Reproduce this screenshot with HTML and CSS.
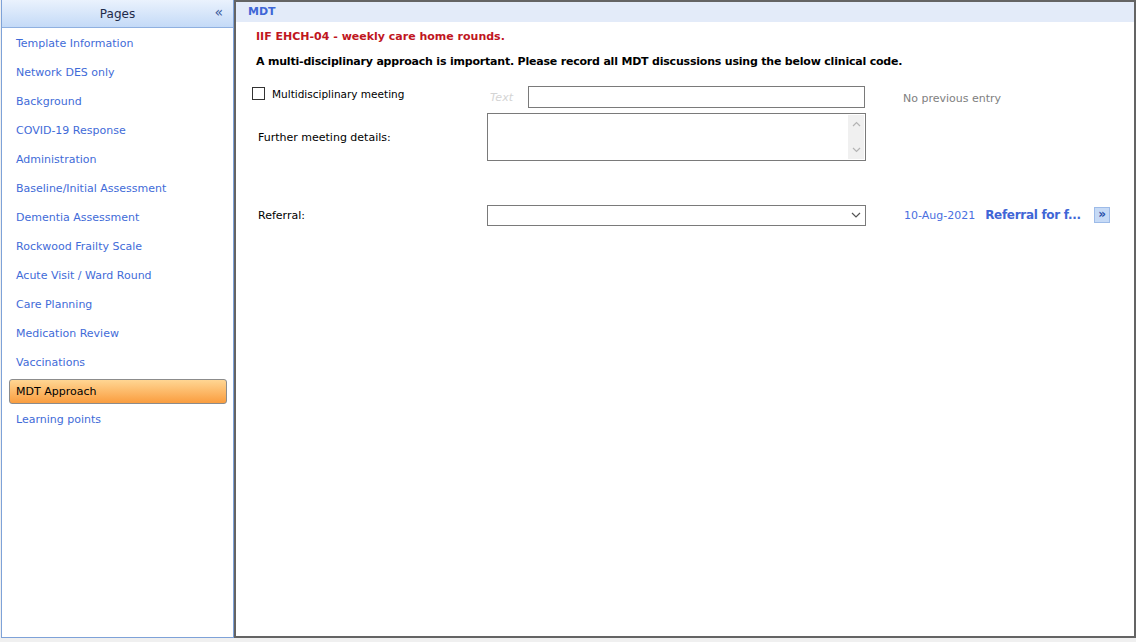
FILE: index.html
```html
<!DOCTYPE html>
<html lang="en">
<head>
    <meta charset="UTF-8">
    <title>MDT Approach</title>
    <link rel="stylesheet" href="styles.css">
</head>
<body>
    <div class="window">
        <div class="sidebar">
            <div class="sidebar-head">
                <span>Pages</span>
                <span class="collapse">&laquo;</span>
            </div>
            <ul class="pages">
                <li>Template Information</li>
                <li>Network DES only</li>
                <li>Background</li>
                <li>COVID-19 Response</li>
                <li>Administration</li>
                <li>Baseline/Initial Assessment</li>
                <li>Dementia Assessment</li>
                <li>Rockwood Frailty Scale</li>
                <li>Acute Visit / Ward Round</li>
                <li>Care Planning</li>
                <li>Medication Review</li>
                <li>Vaccinations</li>
                <li class="active">MDT Approach</li>
                <li>Learning points</li>
            </ul>
        </div>
        <div class="content">
            <div class="content-head">MDT</div>
            <div class="intro">
                <div class="title-red">IIF EHCH-04 - weekly care home rounds.</div>
                <div class="title-bold">A multi-disciplinary approach is important. Please record all MDT discussions using the below clinical code.</div>
            </div>
            <div class="form">
                <div class="row row-meeting">
                    <label class="check"><span class="box"></span>Multidisciplinary meeting</label>
                    <span class="hint">Text</span>
                    <div class="input"></div>
                    <span class="prev">No previous entry</span>
                </div>
                <div class="row row-details">
                    <span class="label">Further meeting details:</span>
                    <div class="textarea">
                        <div class="scroll">
                            <svg width="9" height="6" viewBox="0 0 9 6"><path d="M1 5 L4.5 1.5 L8 5" fill="none" stroke="#b4b4b4" stroke-width="1.2"/></svg>
                            <svg width="9" height="6" viewBox="0 0 9 6"><path d="M1 1 L4.5 4.5 L8 1" fill="none" stroke="#b4b4b4" stroke-width="1.2"/></svg>
                        </div>
                    </div>
                </div>
                <div class="row row-referral">
                    <span class="label">Referral:</span>
                    <div class="select">
                        <svg width="10" height="6" viewBox="0 0 10 6"><path d="M1 1 L5 5 L9 1" fill="none" stroke="#555" stroke-width="1.2"/></svg>
                    </div>
                    <span class="date">10-Aug-2021</span>
                    <span class="last">Referral for f...</span>
                    <span class="more">&raquo;</span>
                </div>
            </div>
        </div>
    </div>
</body>
</html>
```

FILE: styles.css
```css
body {
    margin: 0;
    padding: 0;
    background: #f0f0f0;
    font-family: 'DejaVu Sans', sans-serif;
    font-size: 11px;
    color: #000;
}
.window {
    display: flex;
    height: 638px;
    padding-left: 1px;
}
.sidebar {
    width: 231px;
    border: 1px solid #7ea2d8;
    border-top: none;
    background: #fff;
}
.sidebar-head {
    height: 27px;
    border-bottom: 1px solid #8fb0e0;
    background: linear-gradient(#eaf2fd, #c4daf7);
    display: flex;
    align-items: center;
    justify-content: center;
    position: relative;
    color: #1e2a4a;
    font-size: 12px;
}
.collapse {
    position: absolute;
    right: 10px;
    top: 4px;
    font-size: 14px;
    color: #3a5a9a;
}
.pages {
    list-style: none;
    margin: 0;
    padding: 1px 6px 0 7px;
}
.pages li {
    height: 29px;
    line-height: 29px;
    padding-left: 7px;
    color: #3f6bd8;
}
.pages li.active {
    height: 23px;
    line-height: 23px;
    margin: 2px 0 1px;
    padding-left: 6px;
    border: 1px solid #8c8c8c;
    border-radius: 3px;
    background: linear-gradient(#ffd693, #fa9d3f);
    color: #000;
}
.content {
    flex: 1;
    border: 2px solid #646464;
    background: #fff;
}
.content-head {
    height: 20px;
    line-height: 20px;
    background: #e3ebf9;
    padding-left: 12px;
    color: #3f66d6;
    font-weight: bold;
}
.intro {
    padding: 3px 20px 0;
    font-weight: bold;
}
.title-red {
    color: #c0161e;
    height: 24px;
    line-height: 24px;
}
.title-bold {
    height: 25px;
    line-height: 25px;
    letter-spacing: -0.2px;
}
.form {
    padding: 11px 0 0 16px;
}
.row {
    display: flex;
    align-items: center;
}
.row-meeting {
    height: 23px;
}
.check {
    width: 236px;
    display: flex;
    align-items: center;
    align-self: flex-start;
    margin-top: 2px;
    font-size: 10.5px;
}
.box {
    width: 11px;
    height: 11px;
    border: 1px solid #333;
    margin-right: 7px;
}
.hint {
    width: 38px;
    color: #d4d4d4;
    font-style: italic;
    padding-left: 2px;
    margin-top: 2px;
}
.input {
    width: 335px;
    height: 20px;
    border: 1px solid #7a7a7a;
}
.prev {
    margin-left: 38px;
    color: #808080;
    margin-top: 3px;
}
.row-details {
    margin-top: 5px;
    height: 48px;
}
.label {
    width: 229px;
    padding-left: 6px;
}
.textarea {
    width: 377px;
    height: 46px;
    border: 1px solid #7a7a7a;
    display: flex;
    justify-content: flex-end;
}
.scroll {
    width: 16px;
    margin: 1px;
    background: #f0f0f0;
    display: flex;
    flex-direction: column;
    align-items: center;
    justify-content: space-between;
    padding: 6px 0;
}
.row-referral {
    margin-top: 43px;
    height: 22px;
}
.select {
    width: 379px;
    height: 21px;
    border: 1px solid #7a7a7a;
    display: flex;
    align-items: center;
    justify-content: flex-end;
    padding-right: 4px;
    box-sizing: border-box;
}
.date {
    margin-left: 38px;
    color: #4a6fe0;
}
.last {
    margin-left: 10px;
    width: 109px;
    white-space: nowrap;
    color: #3f66d6;
    font-weight: bold;
    font-size: 12px;
    letter-spacing: -0.3px;
}
.more {
    width: 14px;
    height: 14px;
    line-height: 12px;
    text-align: center;
    background: #c6daf6;
    border: 1px solid #9dbbe8;
    color: #2a4fa8;
    font-weight: bold;
    font-size: 12px;
}
```
